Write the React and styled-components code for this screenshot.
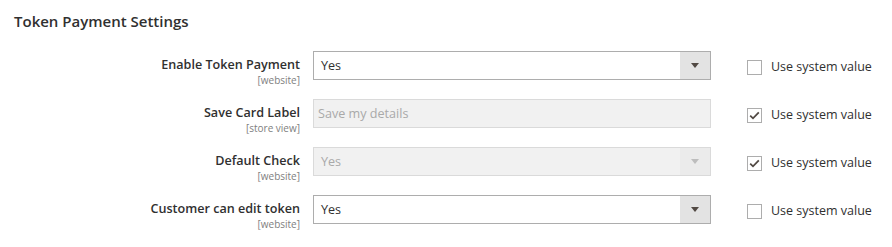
import React from "react";
import styled, { createGlobalStyle } from "styled-components";

const GlobalStyle = createGlobalStyle`
  body {
    margin: 0;
    background: #fff;
    font-family: "Open Sans", "Liberation Sans", sans-serif;
    color: #303030;
  }
`;

const Section = styled.div`
  padding: 11px 14px 0 14px;
`;

const Title = styled.h2`
  margin: 0 0 20px 0;
  font-size: 15px;
  line-height: 20px;
  font-weight: 600;
  color: #303030;
`;

const Form = styled.div`
  display: grid;
  grid-template-columns: 286px 398px auto;
  grid-auto-rows: 35px;
  column-gap: 13px;
  row-gap: 13px;
  align-items: start;
`;

const LabelCell = styled.div`
  text-align: right;
  padding-top: 5px;
`;

const LabelText = styled.div`
  font-size: 12.6px;
  line-height: 18px;
  font-weight: 600;
  color: #303030;
`;

const Scope = styled.div`
  font-size: 10px;
  line-height: 13px;
  color: #808080;
`;

const Control = styled.div`
  height: 29px;
  box-sizing: border-box;
  border: 1px solid ${(p) => (p.disabled ? "#dadada" : "#adadad")};
  background: ${(p) => (p.disabled ? "#f1f1f1" : "#fff")};
  display: flex;
  align-items: center;
`;

const Value = styled.span`
  flex: 1;
  padding-left: ${(p) => (p.input ? "4px" : "7px")};
  font-size: 12.6px;
  color: ${(p) => (p.disabled ? "#a9a9a9" : "#303030")};
`;

const ArrowBox = styled.span`
  width: 30px;
  align-self: stretch;
  background: ${(p) => (p.disabled ? "#ebebeb" : "#e3e3e3")};
  display: flex;
  align-items: center;
  justify-content: center;
`;

const Arrow = styled.span`
  width: 0;
  height: 0;
  border-left: 4px solid transparent;
  border-right: 4px solid transparent;
  border-top: 5px solid ${(p) => (p.disabled ? "#bdbdbd" : "#514943")};
`;

const SystemCell = styled.label`
  display: flex;
  align-items: center;
  gap: 9px;
  margin-left: 23px;
  padding-top: 6px;
  font-size: 12.5px;
  line-height: 17px;
  color: #303030;
`;

const Box = styled.span`
  width: 15px;
  height: 15px;
  box-sizing: border-box;
  border: 1px solid #adadad;
  background: #fff;
  display: flex;
  align-items: center;
  justify-content: center;
  margin-top: 3px;
`;

const rows = [
  { label: "Enable Token Payment", scope: "[website]", type: "select", value: "Yes", disabled: false, checked: false },
  { label: "Save Card Label", scope: "[store view]", type: "input", value: "Save my details", disabled: true, checked: true },
  { label: "Default Check", scope: "[website]", type: "select", value: "Yes", disabled: true, checked: true },
  { label: "Customer can edit token", scope: "[website]", type: "select", value: "Yes", disabled: false, checked: false },
];

const Check = () => (
  <svg width="11" height="9" viewBox="0 0 11 9">
    <path d="M1.2 4.6 L4 7.3 L9.8 1.3" fill="none" stroke="#514943" strokeWidth="1.8" />
  </svg>
);

export default function App() {
  return (
    <>
      <GlobalStyle />
      <Section>
        <Title>Token Payment Settings</Title>
        <Form>
          {rows.map((r) => (
            <React.Fragment key={r.label}>
              <LabelCell>
                <LabelText>{r.label}</LabelText>
                <Scope>{r.scope}</Scope>
              </LabelCell>
              <Control disabled={r.disabled}>
                <Value disabled={r.disabled} input={r.type === "input"}>
                  {r.value}
                </Value>
                {r.type === "select" && (
                  <ArrowBox disabled={r.disabled}>
                    <Arrow disabled={r.disabled} />
                  </ArrowBox>
                )}
              </Control>
              <SystemCell>
                <Box>{r.checked && <Check />}</Box>
                <span>Use system value</span>
              </SystemCell>
            </React.Fragment>
          ))}
        </Form>
      </Section>
    </>
  );
}
